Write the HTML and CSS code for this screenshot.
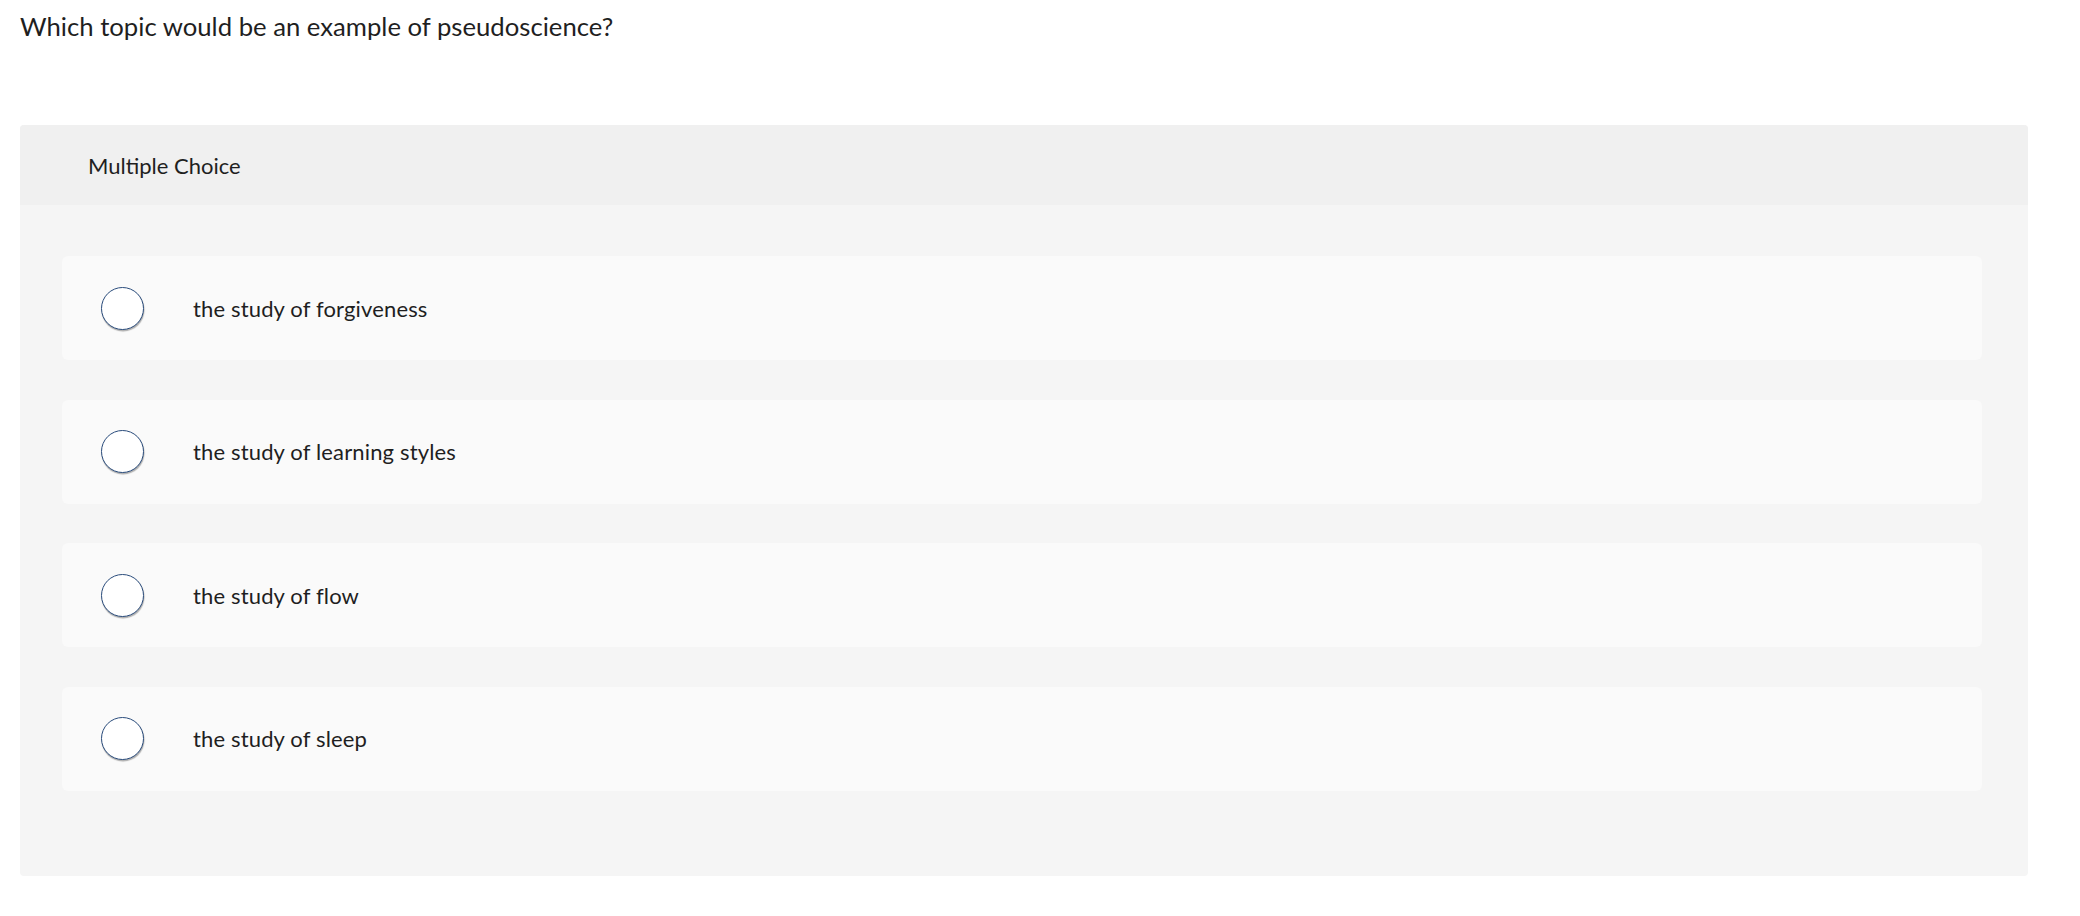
FILE: index.html
```html
<!DOCTYPE html>
<html lang="en">
<head>
<meta charset="utf-8">
<title>Multiple Choice</title>
<link rel="stylesheet" href="styles.css">
</head>
<body>
<main class="page">
  <p class="question">Which topic would be an example of pseudoscience?</p>
  <section class="panel">
    <header class="panel-header">Multiple Choice</header>
    <div class="choices">
      <label class="choice"><span class="radio"></span><span class="choice-text">the study of forgiveness</span></label>
      <label class="choice"><span class="radio"></span><span class="choice-text">the study of learning styles</span></label>
      <label class="choice"><span class="radio"></span><span class="choice-text">the study of flow</span></label>
      <label class="choice"><span class="radio"></span><span class="choice-text">the study of sleep</span></label>
    </div>
  </section>
</main>
</body>
</html>
```
FILE: styles.css
```css
html, body {
  margin: 0;
  padding: 0;
  background: #ffffff;
}
body {
  font-family: "Lato", "Noto Sans", sans-serif;
  color: #222222;
}
.page {
  padding: 0 52px 0 20px;
}
.question {
  margin: 0;
  padding-top: 11px;
  font-size: 25.7px;
  line-height: 30px;
  color: #1f1f1f;
}
.panel {
  margin-top: 84px;
  background: #f5f5f5;
  border-radius: 4px;
  overflow: hidden;
}
.panel-header {
  height: 80px;
  display: flex;
  align-items: center;
  padding-left: 68px;
  background: #f0f0f0;
  font-size: 22px;
  color: #1f1f1f;
}
.choices {
  display: flex;
  flex-direction: column;
  gap: 39.5px;
  padding: 51px 46px 85.5px 42px;
}
.choice {
  height: 104px;
  display: flex;
  align-items: center;
  background: #fafafa;
  border-radius: 6px;
  padding-left: 39px;
}
.radio {
  width: 41px;
  height: 41px;
  border: 1.5px solid #2a4c7c;
  border-radius: 50%;
  background: #ffffff;
  box-shadow: 0.5px 1.5px 1px rgba(0, 0, 0, 0.3);
  flex: none;
}
.choice-text {
  margin-left: 49px;
  font-size: 22px;
  letter-spacing: 0.15px;
  color: #1f1f1f;
}
```
